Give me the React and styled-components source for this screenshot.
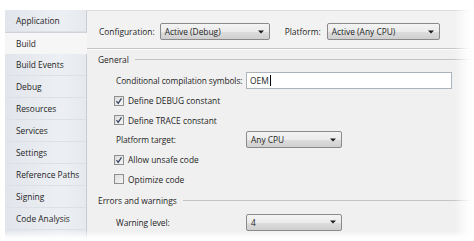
import React from "react";
import styled, { createGlobalStyle } from "styled-components";

const GlobalStyle = createGlobalStyle`
  html, body {
    margin: 0;
    padding: 0;
    background: #ffffff;
  }
  body {
    font-family: "Open Sans", "Noto Sans", sans-serif;
    font-size: 8.4px;
    color: #1e1e1e;
    white-space: nowrap;
  }
`;

const Stage = styled.div`
  position: relative;
  width: 474px;
  height: 241px;
  overflow: hidden;
  background: #ffffff;
`;

const Frame = styled.div`
  display: flex;
  margin: 10px 0 0 5px;
  height: 231px;
`;

const Sidebar = styled.div`
  width: 81px;
  display: flex;
  flex-direction: column;
  background: linear-gradient(to right, #e2e6ec 0%, #eceff3 70%, #e6e9ee 100%);
`;

const Tab = styled.div`
  height: 22px;
  display: flex;
  align-items: center;
  padding-left: 11px;
  border-bottom: 1px solid ${p => (p.active ? "transparent" : "#dde1e7")};
  box-sizing: border-box;
  background: ${p => (p.active ? "#f6f6f6" : "transparent")};
  margin-right: ${p => (p.active ? "-1px" : "0")};
  position: relative;
  z-index: ${p => (p.active ? 2 : 0)};
  border-top: ${p => (p.active ? "1px solid #cfd3d9" : "none")};
`;

const Content = styled.div`
  flex: 1;
  display: flex;
  flex-direction: column;
  background: #f0f0f0;
  border-left: 1px solid #c9cdd3;
  border-top: 1px solid #d8dbe0;
`;

const Header = styled.div`
  height: 38px;
  display: flex;
  align-items: center;
  padding: 4px 0 0 12px;
  box-sizing: border-box;
  border-bottom: 1px solid #c6c6c6;
  box-shadow: 0 1px 0 #fafafa;
  background: #f2f2f2;
`;

const HeaderLabel = styled.span`
  margin-right: ${p => p.gap}px;
  margin-left: ${p => p.lead || 0}px;
`;

const Select = styled.div`
  width: ${p => p.w}px;
  height: 17px;
  box-sizing: border-box;
  border: 1px solid #8a8a8a;
  border-radius: 2px;
  background: linear-gradient(to bottom, #f4f4f4 0%, #ebebeb 50%, #dddddd 51%, #cfcfcf 100%);
  display: flex;
  align-items: center;
  justify-content: space-between;
  padding: 0 5px 0 4px;
`;

const Arrow = () => (
  <svg width="6" height="4" viewBox="0 0 6 4">
    <path d="M0 0.5 H6 L3 3.5 Z" fill="#1a1a1a" />
  </svg>
);

const Body = styled.div`
  display: flex;
  flex-direction: column;
  padding: 0 0 0 11px;
`;

const Group = styled.div`
  display: flex;
  align-items: center;
  height: 20px;
  margin-top: ${p => p.mt || 0}px;
  &::after {
    content: "";
    flex: 1;
    height: 1px;
    background: #c4c4c4;
    margin-left: 6px;
  }
`;

const Row = styled.div`
  display: flex;
  align-items: center;
  height: ${p => p.h || 19.6}px;
  padding-left: 18px;
`;

const Label = styled.span`
  width: 130px;
  letter-spacing: -0.1px;
`;

const TextBox = styled.div`
  width: 206px;
  height: 17px;
  box-sizing: border-box;
  border: 1px solid #abb3bd;
  background: #ffffff;
  display: flex;
  align-items: center;
  padding-left: 3px;
`;

const Caret = styled.span`
  display: inline-block;
  width: 1px;
  height: 11px;
  background: #000;
  margin-left: 1px;
`;

const CheckRow = styled.label`
  display: flex;
  align-items: center;
  height: 19.6px;
  padding-left: 16px;
  gap: 4px;
`;

const Box = styled.span`
  width: 10px;
  height: 10px;
  box-sizing: border-box;
  border: 1px solid #8e8f8f;
  background: linear-gradient(135deg, #dcdcdc 0%, #f6f6f6 100%);
  display: flex;
  align-items: center;
  justify-content: center;
`;

const Check = () => (
  <svg width="8" height="8" viewBox="0 0 8 8">
    <path d="M1.5 4.2 L3.2 6.3 L6.5 1.3" fill="none" stroke="#3a4a6b" strokeWidth="1.3" />
  </svg>
);

const Fade = styled.div`
  position: absolute;
  pointer-events: none;
  ${p => p.side}: 0;
  ${p => (p.side === "right" ? "top: 0; bottom: 0; width: " + p.size + "px;" : "left: 0; right: 0; height: " + p.size + "px;")}
  background: linear-gradient(to ${p => (p.side === "right" ? "left" : p.side === "top" ? "bottom" : "top")}, #ffffff 0%, rgba(255,255,255,0.85) 35%, rgba(255,255,255,0) 100%);
`;

const tabs = [
  "Application",
  "Build",
  "Build Events",
  "Debug",
  "Resources",
  "Services",
  "Settings",
  "Reference Paths",
  "Signing",
  "Code Analysis",
];

function CheckItem({ checked, children }) {
  return (
    <CheckRow>
      <Box>{checked && <Check />}</Box>
      <span>{children}</span>
    </CheckRow>
  );
}

export default function App() {
  return (
    <Stage>
      <GlobalStyle />
      <Frame>
        <Sidebar>
          {tabs.map(t => (
            <Tab key={t} active={t === "Build"}>
              {t}
            </Tab>
          ))}
        </Sidebar>
        <Content>
          <Header>
            <HeaderLabel gap={5}>Configuration:</HeaderLabel>
            <Select w={110}>
              <span>Active (Debug)</span>
              <Arrow />
            </Select>
            <HeaderLabel gap={6} lead={15}>Platform:</HeaderLabel>
            <Select w={113}>
              <span>Active (Any CPU)</span>
              <Arrow />
            </Select>
          </Header>
          <Body>
            <Group>General</Group>
            <Row h={22}>
              <Label>Conditional compilation symbols:</Label>
              <TextBox>
                OEM<Caret />
              </TextBox>
            </Row>
            <CheckItem checked>Define DEBUG constant</CheckItem>
            <CheckItem checked>Define TRACE constant</CheckItem>
            <Row>
              <Label>Platform target:</Label>
              <Select w={96}>
                <span>Any CPU</span>
                <Arrow />
              </Select>
            </Row>
            <CheckItem checked>Allow unsafe code</CheckItem>
            <CheckItem>Optimize code</CheckItem>
            <Group mt={2}>Errors and warnings</Group>
            <Row h={23}>
              <Label>Warning level:</Label>
              <Select w={96}>
                <span>4</span>
                <Arrow />
              </Select>
            </Row>
          </Body>
        </Content>
      </Frame>
      <Fade side="right" size={20} />
      <Fade side="top" size={9} />
      <Fade side="bottom" size={10} />
    </Stage>
  );
}
